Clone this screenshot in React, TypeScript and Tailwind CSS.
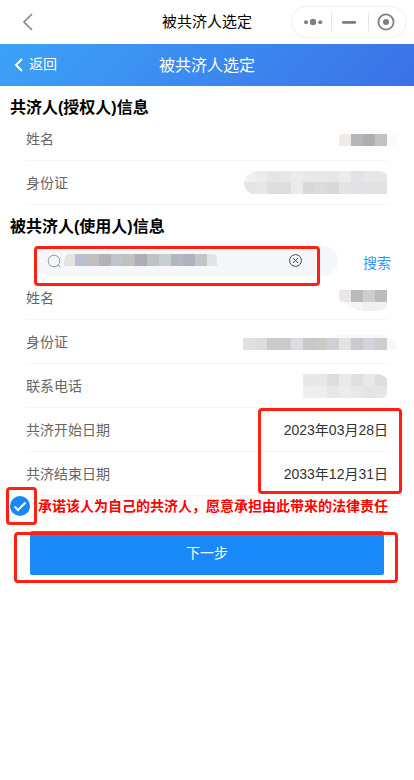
import type { ReactNode } from "react";
import clsx from "clsx";

type Block = { x: number; y: number; h: number; w?: number; colors: string[] };

type MosaicProps = {
  width: number;
  height: number;
  blocks: Block[];
  outline: string;
  id: string;
  className?: string;
};

// Censored value: runs of 12px coloured cells, trimmed to a rounded outline
const Mosaic = ({ width, height, blocks, outline, id, className }: MosaicProps) => (
  <svg width={width} height={height} className={clsx("shrink-0", className)} shapeRendering="crispEdges">
    <clipPath id={id}>
      <path d={outline} />
    </clipPath>
    <g clipPath={`url(#${id})`}>
      {blocks.map((b, i) =>
        b.colors.map((color, j) => (
          <rect
            key={`${i}-${j}`}
            x={b.x + j * 12}
            y={b.y}
            width={b.w ?? 12}
            height={b.h}
            fill={color}
          />
        ))
      )}
    </g>
  </svg>
);

const Row = ({ label, children }: { label: string; children: ReactNode }) => (
  <div className="flex h-11 items-start justify-between border-b border-[#f5f5f6]">
    <span className="text-sm leading-[44px] text-[#666]">{label}</span>
    {children}
  </div>
);

const Highlight = ({ className }: { className: string }) => (
  <div className={clsx("pointer-events-none absolute rounded-[4px] border-3 border-[#ff2014]", className)} />
);

const TopBar = () => (
  <header className="grid h-11 grid-cols-[1fr_auto_1fr] items-center pr-[7px] pl-[22px]">
    <svg width="12" height="18" fill="none" stroke="#888" strokeWidth="1.7">
      <path d="M10 1 2 9l8 8" />
    </svg>
    <h1 className="-ml-[15px] pt-px text-[15px] text-black">被共济人选定</h1>
    <svg width="116" height="32" className="justify-self-end" fill="none">
      <rect x="0.5" y="0.5" width="115" height="31" rx="15.5" stroke="#f0f0f0" />
      <g fill="#7f7f7f">
        <circle cx="15" cy="16.2" r="2" />
        <circle cx="22" cy="16" r="3.2" />
        <circle cx="29.2" cy="16.2" r="2" />
        <rect x="51" y="15" width="14" height="2.8" rx="1" />
        <circle cx="95" cy="16" r="3" />
      </g>
      <path d="M40.5 7v18M77.5 7v18" stroke="#e3e3e3" />
      <circle cx="95" cy="16" r="7.6" stroke="#7f7f7f" strokeWidth="1.8" />
    </svg>
  </header>
);

const NavBar = () => (
  <nav className="grid h-[42px] grid-cols-[1fr_auto_1fr] items-center bg-linear-135 from-[#3ca2f8] to-[#3b71e6] px-[14px] text-white">
    <a className="flex items-center gap-[6px] text-sm">
      <svg width="9" height="14" fill="none" stroke="currentColor" strokeWidth="2">
        <path d="M8 1 2 7l6 6" />
      </svg>
      <span className="-mt-0.5">返回</span>
    </a>
    <h2 className="pt-0.5 text-base">被共济人选定</h2>
  </nav>
);

const SearchBar = () => (
  <div className="flex h-[30px] items-start pl-[34px]">
    <div className="flex h-[30px] w-[304px] rounded-full bg-[#f6f7fb]">
      <svg width="15" height="15" className="mt-[8px] ml-[13px]" fill="none" stroke="#999">
        <circle cx="7" cy="7" r="5.8" />
        <path d="m11 11 2.4 2.4" />
      </svg>
      <Mosaic
        id="search"
        className="mt-2 ml-0.5"
        width={153}
        height={12}
        outline="M4 0H150Q153 1 153 6V12H0V8Q1 1 4 0Z"
        blocks={[
          {
            x: -1,
            y: 0,
            h: 12,
            colors: ["#e4e3e0", "#b9bfce", "#c0c0c0", "#b3b2ba", "#bfc4c8", "#c0c1bc", "#adadb6", "#bdc2c4", "#c6cfd3", "#b5b5c0", "#afb3bf", "#c3c5c8", "#e3e4e6"],
          },
        ]}
      />
      <svg width="14" height="14" className="mt-2 ml-[72px]" fill="none" stroke="#444">
        <circle cx="6.5" cy="6.5" r="5.9" />
        <path d="m4 4 5 5M9 4 4 9" />
      </svg>
    </div>
    <button className="ml-[25px] text-sm leading-[34px] text-[#3296fa]">搜索</button>
  </div>
);

const App = () => {
  return (
    <div className="relative h-[780px] w-[414px] overflow-hidden bg-white font-['Liberation_Sans','Noto_Sans_CJK_SC',sans-serif]">
      <TopBar />
      <NavBar />

      <h3 className="h-[31px] pl-[10px] text-base leading-[43px] font-bold text-black">共济人(授权人)信息</h3>
      <section className="px-[26px]">
        <Row label="姓名">
          <Mosaic
            id="owner-name"
            className="mt-[13px] -mr-[9px]"
            width={58}
            height={16}
            outline="M3 4H12V0H48V4H58V12Q57 16 55 16H0V8Q1 4 3 4Z"
            blocks={[
              { x: 12, y: 0, h: 4, w: 36, colors: ["#fcfcfc"] },
              { x: 0, y: 4, h: 12, colors: ["#f0ebe7", "#b4b6bb", "#adafaf", "#c3c0c1", "#fafafe"] },
            ]}
          />
        </Row>
        <Row label="身份证">
          <Mosaic
            id="owner-id"
            className="mt-[10px] mr-px"
            width={143}
            height={23}
            outline="M12 0H133Q140 0 143 4V23H8Q0 20 0 11Q2 2 12 0Z"
            blocks={[
              { x: -1, y: 0, h: 11, colors: ["#f1f1f1", "#eeebec", "#e5e6e8", "#e7e7e7", "#ebebeb", "#e9e9e7", "#e8e8e8", "#e7e7e5", "#ebedec", "#e3e3e3", "#e7e7e7", "#e7e7e7"] },
              { x: -1, y: 11, h: 12, colors: ["#e5e5e5", "#e8e7e8", "#dfdedf", "#dfdedf", "#ebebed", "#dbd9d8", "#dddbdb", "#d9d8d8", "#e1e3e4", "#dfe1e4", "#e1e2e3", "#e0e2e2"] },
            ]}
          />
        </Row>
      </section>

      <h3 className="h-[41px] pl-[10px] text-base leading-[43px] font-bold text-black">被共济人(使用人)信息</h3>
      <SearchBar />
      <section className="px-[26px]">
        <Row label="姓名">
          <Mosaic
            id="user-name"
            className="mt-[14px] mr-px"
            width={48}
            height={21}
            outline="M0 0H48V16Q44 21 36 21H24Q16 21 11 15L4 12Q0 11 0 8Z"
            blocks={[
              { x: 0, y: 0, h: 12, colors: ["#ebe7e7", "#bababc", "#cdced0", "#bbbbbb"] },
              { x: 0, y: 12, h: 9, colors: ["#f8f8f8", "#f4f5f7", "#f0f0ef", "#f1f1f1"] },
            ]}
          />
        </Row>
        <Row label="身份证">
          <Mosaic
            id="user-id"
            className="mt-[15px] -mr-[8px]"
            width={153}
            height={15}
            outline="M0 3H84L94 0H144V3Q153 4 153 15H0Z"
            blocks={[
              { x: 84, y: 0, h: 3, w: 60, colors: ["#f8f8f8"] },
              { x: 0, y: 3, h: 12, colors: ["#dfe1e1", "#dcdcdc", "#cbcbcb", "#cdcccc", "#dadcdf", "#cac8c7", "#cec9c9", "#cfd1d6", "#e2e4e3", "#cbc9cb", "#d1d4dc", "#cfcdcd", "#f4f9fe"] },
            ]}
          />
        </Row>
        <Row label="联系电话">
          <Mosaic
            id="user-phone"
            className="mt-[10px] mr-px"
            width={84}
            height={24}
            outline="M0 0H72Q80 0 84 5V19Q83 24 78 24H0Z"
            blocks={[
              { x: 0, y: 0, h: 12, colors: ["#e8e8e6", "#e8e8e8", "#dfdddf", "#eaeae8", "#dee1e1", "#e9e9e9", "#dddde0"] },
              { x: 0, y: 12, h: 12, colors: ["#f0eff0", "#eeeeef", "#e7e7e7", "#ececed", "#eae7e9", "#e2e5e8", "#e6e6e5"] },
            ]}
          />
        </Row>
        <Row label="共济开始日期">
          <span className="text-sm leading-[44px] text-[#333]">2023年03月28日</span>
        </Row>
        <Row label="共济结束日期">
          <span className="text-sm leading-[44px] text-[#333]">2033年12月31日</span>
        </Row>
      </section>

      <label className="flex h-5 items-center gap-2 pl-[10px]">
        <svg width="20" height="20" fill="none">
          <circle cx="10" cy="10" r="10" fill="#1989fa" />
          <path d="m4.5 10.5 3.5 3.5 7.5-7.5" stroke="#fff" strokeWidth="2" />
        </svg>
        <span className="text-sm font-bold whitespace-nowrap text-[#f00]">
          承诺该人为自己的共济人，愿意承担由此带来的法律责任
        </span>
      </label>

      <button className="mt-[15px] ml-[30px] block h-11 w-[354px] rounded-[2px] bg-[#1989fa] text-sm text-white">
        下一步
      </button>

      <Highlight className="top-[246px] left-[34px] h-[40px] w-[286px]" />
      <Highlight className="top-[408px] left-[258px] h-[86px] w-[144px]" />
      <Highlight className="top-[487px] left-[6px] h-[38px] w-[31px]" />
      <Highlight className="top-[532px] left-[14px] h-[51px] w-[384px]" />
    </div>
  );
};

export default App;
